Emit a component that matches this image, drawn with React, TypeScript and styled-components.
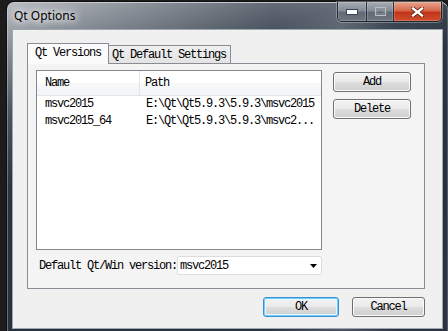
import styled, { createGlobalStyle } from "styled-components";

const GlobalStyle = createGlobalStyle`
  html, body {
    margin: 0;
    padding: 0;
    background: #1c1c1c;
  }
  body {
    width: 448px;
    height: 331px;
    overflow: hidden;
  }
`;

const MONO = `"Liberation Mono", "DejaVu Sans Mono", monospace`;

const Desktop = styled.div`
  width: 448px;
  height: 331px;
  box-sizing: border-box;
  padding: 2px 0 0 7px;
  background: #1c1c1c;
  overflow: hidden;
`;

const Window = styled.div`
  width: 441px;
  height: 329px;
  box-sizing: border-box;
  padding: 0 5px 2px 5px;
  display: flex;
  flex-direction: column;
  border-radius: 7px 7px 0 0;
  background:
    linear-gradient(to right, rgba(255, 255, 255, 0) 60%, rgba(200, 205, 212, 0.22) 76%, rgba(255, 255, 255, 0) 88%),
    linear-gradient(162deg, #b9bdc2 0%, #8a9098 10%, #4a535f 24%, #2a3441 40%, #27313e 70%, #2b3440 100%);
  box-shadow:
    inset 0 1px 0 #c8ccd1,
    inset 1px 0 0 rgba(255, 255, 255, 0.3),
    inset -1px 0 0 rgba(255, 255, 255, 0.2),
    0 0 0 1px #0e0e0e;
`;

const TitleBar = styled.div`
  height: 27px;
  display: flex;
  align-items: flex-start;
  justify-content: space-between;
`;

const Title = styled.span`
  margin-left: 2px;
  padding-top: 5px;
  font-family: "Noto Sans", "Liberation Sans", sans-serif;
  font-size: 12px;
  line-height: 18px;
  color: #000;
  text-shadow:
    0 0 6px #fff,
    0 0 10px rgba(255, 255, 255, 0.9),
    0 0 14px rgba(255, 255, 255, 0.7);
`;

const Captions = styled.div`
  display: flex;
  margin-right: 1px;
  height: 19px;
  border: 1px solid #1f2630;
  border-top: none;
  border-radius: 0 0 5px 5px;
  overflow: hidden;
  box-shadow: 0 0 0 1px rgba(220, 225, 230, 0.35);
`;

const CaptionButton = styled.div<{ $w: number; $close?: boolean }>`
  width: ${(p) => p.$w}px;
  height: 19px;
  display: flex;
  align-items: center;
  justify-content: center;
  box-sizing: border-box;
  border-left: 1px solid #2a313a;
  box-shadow: inset 0 0 0 1px rgba(255, 255, 255, 0.18);
  background: ${(p) =>
    p.$close
      ? "linear-gradient(#e8a48f 0%, #d6684a 45%, #c2341a 55%, #cf4f2e 100%)"
      : "linear-gradient(#a6acb3 0%, #858c95 45%, #616a75 55%, #6d7681 100%)"};
  &:first-child {
    border-left: none;
  }
`;

const Client = styled.div`
  flex: 1;
  display: flex;
  flex-direction: column;
  box-sizing: border-box;
  padding: 13px 17px 11px 14px;
  background: #f0f0f0;
  border: 1px solid #9ea6af;
  font-family: ${MONO};
  font-size: 12px;
  letter-spacing: -1.2px;
  color: #000;
`;

const TabBar = styled.div`
  height: 20px;
  display: flex;
  align-items: flex-end;
`;

const Tab = styled.div<{ $active?: boolean }>`
  position: relative;
  box-sizing: border-box;
  border: 1px solid #898c95;
  border-bottom: none;
  white-space: nowrap;
  ${(p) =>
    p.$active
      ? `
    width: 82px;
    height: 21px;
    margin-bottom: -1px;
    padding-left: 7px;
    line-height: 19px;
    background: #fbfbfb;
    z-index: 1;
  `
      : `
    width: 123px;
    height: 18px;
    margin-left: -1px;
    padding-left: 3px;
    line-height: 19px;
    background: linear-gradient(#f0f0f0, #e3e3e3);
  `}
`;

const Pane = styled.div`
  height: 226px;
  box-sizing: border-box;
  border: 1px solid #898c95;
  background: #f4f4f4;
  padding: 6px 13px 12px 8px;
  display: grid;
  grid-template-columns: 286px 78px;
  column-gap: 11px;
`;

const LeftColumn = styled.div`
  display: flex;
  flex-direction: column;
  gap: 6px;
`;

const List = styled.div`
  height: 180px;
  box-sizing: border-box;
  border: 1px solid #828790;
  background: #fff;
`;

const HeaderRow = styled.div`
  display: flex;
  height: 25px;
  box-sizing: border-box;
  border-bottom: 1px solid #e5e5e5;
  background: linear-gradient(#ffffff 0%, #ffffff 50%, #f7f8f9 51%, #f3f4f6 100%);
`;

const HeaderCell = styled.div<{ $w?: number }>`
  ${(p) => (p.$w ? `width: ${p.$w}px;` : "flex: 1;")}
  box-sizing: border-box;
  padding-left: ${(p) => (p.$w ? 8 : 5)}px;
  line-height: 24px;
  border-right: ${(p) => (p.$w ? "1px solid #e3e5e7" : "none")};
`;

const Row = styled.div`
  display: flex;
  height: 17px;
  line-height: 17px;
`;

const Cell = styled.div<{ $w?: number }>`
  ${(p) => (p.$w ? `width: ${p.$w}px;` : "flex: 1;")}
  box-sizing: border-box;
  padding-left: ${(p) => (p.$w ? 8 : 6)}px;
  white-space: nowrap;
  overflow: hidden;
`;

const ComboRow = styled.div`
  display: flex;
  align-items: center;
  height: 19px;
  padding-left: 3px;
`;

const Label = styled.span`
  width: 138px;
  white-space: nowrap;
`;

const Combo = styled.div`
  flex: 1;
  height: 19px;
  box-sizing: border-box;
  display: flex;
  align-items: center;
  justify-content: space-between;
  padding: 0 4px 0 2px;
  border: 1px solid #dcdcdc;
  border-radius: 2px;
  background: #fff;
`;

const SideButtons = styled.div`
  display: flex;
  flex-direction: column;
  gap: 7px;
  padding-top: 2px;
`;

const Button = styled.button<{ $w?: number; $focused?: boolean }>`
  width: ${(p) => (p.$w ? `${p.$w}px` : "100%")};
  height: 20px;
  padding: 0;
  box-sizing: border-box;
  font-family: ${MONO};
  font-size: 12px;
  letter-spacing: -1.2px;
  color: #000;
  border-radius: 3px;
  border: 1px solid ${(p) => (p.$focused ? "#3c8fcf" : "#707070")};
  background: linear-gradient(#f2f2f2 0%, #ebebeb 48%, #dddddd 52%, #cfcfcf 100%);
  box-shadow: ${(p) =>
    p.$focused
      ? "inset 0 0 0 1px #6fd0fb, inset 0 0 0 2px #eaf6fd"
      : "inset 0 0 0 1px #fbfbfb"};
`;

const DialogButtons = styled.div`
  margin-top: 8px;
  display: flex;
  justify-content: flex-end;
  gap: 13px;
`;

const versions = [
  { name: "msvc2015", path: "E:\\Qt\\Qt5.9.3\\5.9.3\\msvc2015" },
  { name: "msvc2015_64", path: "E:\\Qt\\Qt5.9.3\\5.9.3\\msvc2..." },
];

function MinimizeIcon() {
  return (
    <svg width="12" height="6" viewBox="0 0 12 6">
      <rect x="0.5" y="0.5" width="11" height="5" fill="#fff" stroke="#3a4450" />
    </svg>
  );
}

function MaximizeIcon() {
  return (
    <svg width="11" height="9" viewBox="0 0 11 9">
      <rect x="0.5" y="0.5" width="10" height="8" fill="none" stroke="#b8bec5" />
      <rect x="2" y="3" width="7" height="4" fill="none" stroke="#8a9199" />
    </svg>
  );
}

function CloseIcon() {
  return (
    <svg width="13" height="10" viewBox="0 0 13 10">
      <path d="M2 1.5 L11 8.5 M11 1.5 L2 8.5" stroke="#5a1a0c" strokeWidth="4" strokeLinecap="square" />
      <path d="M2 1.5 L11 8.5 M11 1.5 L2 8.5" stroke="#fff" strokeWidth="2.4" strokeLinecap="square" />
    </svg>
  );
}

function ArrowDown() {
  return (
    <svg width="7" height="4" viewBox="0 0 7 4">
      <path d="M0 0 H7 L3.5 4 Z" fill="#000" />
    </svg>
  );
}

export default function App() {
  return (
    <>
      <GlobalStyle />
      <Desktop>
        <Window>
          <TitleBar>
            <Title>Qt Options</Title>
            <Captions>
              <CaptionButton $w={28}>
                <MinimizeIcon />
              </CaptionButton>
              <CaptionButton $w={27}>
                <MaximizeIcon />
              </CaptionButton>
              <CaptionButton $w={48} $close>
                <CloseIcon />
              </CaptionButton>
            </Captions>
          </TitleBar>
          <Client>
            <TabBar>
              <Tab $active>Qt Versions</Tab>
              <Tab>Qt Default Settings</Tab>
            </TabBar>
            <Pane>
              <LeftColumn>
                <List>
                  <HeaderRow>
                    <HeaderCell $w={103}>Name</HeaderCell>
                    <HeaderCell>Path</HeaderCell>
                  </HeaderRow>
                  {versions.map((v) => (
                    <Row key={v.name}>
                      <Cell $w={103}>{v.name}</Cell>
                      <Cell>{v.path}</Cell>
                    </Row>
                  ))}
                </List>
                <ComboRow>
                  <Label>Default Qt/Win version:</Label>
                  <Combo>
                    <span>msvc2015</span>
                    <ArrowDown />
                  </Combo>
                </ComboRow>
              </LeftColumn>
              <SideButtons>
                <Button>Add</Button>
                <Button>Delete</Button>
              </SideButtons>
            </Pane>
            <DialogButtons>
              <Button $w={76} $focused>
                OK
              </Button>
              <Button $w={73}>Cancel</Button>
            </DialogButtons>
          </Client>
        </Window>
      </Desktop>
    </>
  );
}
